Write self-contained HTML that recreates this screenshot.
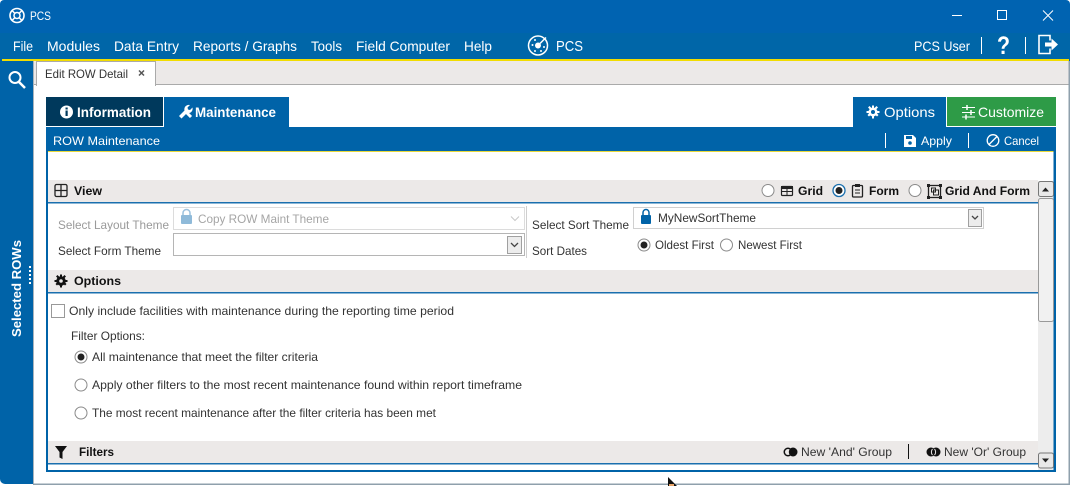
<!DOCTYPE html>
<html><head><meta charset="utf-8"><style>
html,body{margin:0;padding:0;background:#fff;width:1072px;height:486px;overflow:hidden}
svg{display:block}
text{font-family:"Liberation Sans",sans-serif;font-size:12px;fill:#333}
.w{fill:#fff}.m{font-size:14px;fill:#fff}.b{font-weight:bold;fill:#111}.t{font-size:14px;font-weight:bold;fill:#fff}
.g{fill:#9a9a9a}.k{fill:#111}
.rad{fill:#fff;stroke:#8a8a8a;stroke-width:1}
</style></head><body>
<svg width="1072" height="486" viewBox="0 0 1072 486" xmlns="http://www.w3.org/2000/svg">
<rect width="1072" height="486" fill="#fff"/>
<path d="M4 0H1066a4 4 0 0 1 4 4V61H0V4a4 4 0 0 1 4-4z" fill="#0063b1"/>
<rect y="33" width="1070" height="26" fill="#0066a8"/>
<rect x="0" y="59" width="1070" height="2" fill="#0063a8"/>
<rect x="2" y="59" width="1067" height="2" fill="#f2dc00"/>
<path d="M0 61H33V484H5a5 5 0 0 1-5-5z" fill="#0063a8"/>
<rect x="33" y="61" width="1036" height="23" fill="#ece9e8"/>
<rect x="33" y="84" width="1036" height="1" fill="#aaa"/>
<rect x="33" y="61" width="1" height="423" fill="#a9b4bc"/>
<rect x="1068.500" y="61" width="1.500" height="424" fill="#8fa0ac"/>
<rect x="33" y="483.500" width="1037" height="1.500" fill="#8fa0ac"/>
<!-- title -->
<g fill="none" stroke="#fff"><circle cx="17" cy="15.500" r="7" stroke-width="1.600"/><circle cx="17" cy="15.500" r="3" stroke-width="1.500"/><path d="M12 10.500l3 3M22 10.500l-3 3M12 20.500l3-3M22 20.500l-3-3" stroke-width="1.500"/></g>
<text x="30" y="20" class="w" textLength="21" lengthAdjust="spacingAndGlyphs">PCS</text>
<path d="M952 15.500h10" stroke="#fff"/><rect x="997.500" y="10.500" width="9" height="9" fill="none" stroke="#fff"/><path d="M1043 10.500l10 10M1053 10.500l-10 10" stroke="#fff"/>
<!-- menu -->
<text x="13" y="51" class="m" textLength="20" lengthAdjust="spacingAndGlyphs">File</text>
<text x="47" y="51" class="m" textLength="53" lengthAdjust="spacingAndGlyphs">Modules</text>
<text x="114" y="51" class="m" textLength="65" lengthAdjust="spacingAndGlyphs">Data Entry</text>
<text x="193" y="51" class="m" textLength="104" lengthAdjust="spacingAndGlyphs">Reports / Graphs</text>
<text x="311" y="51" class="m" textLength="31" lengthAdjust="spacingAndGlyphs">Tools</text>
<text x="356" y="51" class="m" textLength="94" lengthAdjust="spacingAndGlyphs">Field Computer</text>
<text x="464" y="51" class="m" textLength="28" lengthAdjust="spacingAndGlyphs">Help</text>
<g fill="none" stroke="#fff"><circle cx="538" cy="45.500" r="9.500" stroke-width="1.500"/><circle cx="538" cy="45.500" r="2.500" fill="#fff"/><path d="M540 43.500l6-6" stroke-width="1.500"/></g>
<g fill="#fff"><circle cx="532.500" cy="45" r="1"/><circle cx="535" cy="40" r="1"/><circle cx="535" cy="51" r="1"/><circle cx="541" cy="51" r="1"/><circle cx="544" cy="47" r="1"/></g>
<text x="556" y="51" class="w" style="font-size:15px" textLength="27" lengthAdjust="spacingAndGlyphs">PCS</text>
<text x="914" y="51" class="m" textLength="56" lengthAdjust="spacingAndGlyphs">PCS User</text>
<rect x="981" y="37" width="1" height="17" fill="#fff"/><rect x="1025" y="37" width="1" height="17" fill="#fff"/>
<text x="997" y="54" style="font-size:25px;font-weight:bold;fill:#fff" textLength="13" lengthAdjust="spacingAndGlyphs">?</text>
<path d="M1050 40.500v-5h-11v18h11v-5" fill="none" stroke="#fff" stroke-width="1.600"/><path d="M1045 42.500h6.500v-4l6.500 6-6.500 6v-4h-6.500z" fill="#fff"/>
<!-- sidebar -->
<circle cx="15" cy="77.500" r="5.500" fill="none" stroke="#fff" stroke-width="2"/><path d="M19 82l6 6" stroke="#fff" stroke-width="2.500"/>
<text transform="translate(21,337) rotate(-90)" style="font-size:13px;font-weight:bold;fill:#fff" textLength="97" lengthAdjust="spacingAndGlyphs">Selected ROWs</text>
<g fill="#fff"><rect x="29" y="266" width="2" height="2"/><rect x="29" y="270" width="2" height="2"/><rect x="29" y="274" width="2" height="2"/><rect x="29" y="278" width="2" height="2"/><rect x="29" y="282" width="2" height="2"/></g>
<!-- doc tab -->
<rect x="36.500" y="61.500" width="119" height="24" fill="#fff" stroke="#aaa"/><rect x="37" y="84" width="118" height="2" fill="#fff"/>
<text x="45" y="78" textLength="83" lengthAdjust="spacingAndGlyphs">Edit ROW Detail</text>
<path d="M139 70.500l5 5M144 70.500l-5 5" stroke="#555" stroke-width="1.500"/>
<!-- panel tabs -->
<rect x="46" y="97" width="117" height="29" fill="#00395c"/>
<rect x="164" y="97" width="125" height="30" fill="#0063a8"/>
<rect x="853" y="97" width="93" height="30" fill="#0063a8"/>
<rect x="947" y="97" width="109" height="29" fill="#2e9b47"/>
<circle cx="66.500" cy="112" r="6.500" fill="#fff"/><rect x="65.500" y="110.500" width="2.200" height="5.500" fill="#00395c"/><rect x="65.500" y="107.500" width="2.200" height="2" fill="#00395c"/>
<text x="77" y="117" class="t" textLength="74" lengthAdjust="spacingAndGlyphs">Information</text>
<path d="M179 116l5.500-5.500a4.500 4.500 0 0 1 5.500-5.500l-2.500 2.500.5 2 2 .5 2.500-2.500a4.500 4.500 0 0 1-5.500 5.500l-5.500 5.500z" fill="#fff"/>
<path d="M185.500 111.500l5.500 5.500" stroke="#fff" stroke-width="3"/>
<text x="195" y="117" class="t" textLength="81" lengthAdjust="spacingAndGlyphs">Maintenance</text>
<g fill="#fff"><circle cx="873" cy="112" r="4.500"/><path d="M872 105.500h2v13h-2zM866.500 111h13v2h-13zM868 107.500l1.500-1.500 9 9-1.500 1.500zM878 107.500l-1.500-1.500-9 9 1.500 1.500z"/></g><circle cx="873" cy="112" r="2" fill="#0063a8"/>
<text x="884" y="117" class="m" textLength="51" lengthAdjust="spacingAndGlyphs">Options</text>
<path d="M962 107.500h13M962 112.500h13M962 117h13" stroke="#fff"/><path d="M967 105v5M971 110v5M966 114.500v5" stroke="#fff" stroke-width="1.500"/>
<text x="978" y="117" class="m" textLength="66" lengthAdjust="spacingAndGlyphs">Customize</text>
<!-- header strip -->
<rect x="46" y="127" width="1010" height="24" fill="#0063a8"/>
<rect x="48" y="151" width="1006" height="1" fill="#e9d93a"/>
<text x="53" y="145" class="w" textLength="107" lengthAdjust="spacingAndGlyphs">ROW Maintenance</text>
<rect x="885" y="133" width="1" height="15" fill="#fff"/><rect x="968" y="133" width="1" height="15" fill="#fff"/>
<path d="M904 135h9l3 3v9h-12z" fill="#fff"/><rect x="906" y="136" width="6" height="3" fill="#0063a8"/><circle cx="910" cy="143" r="1.800" fill="#0063a8"/>
<text x="921" y="145" class="w" textLength="31" lengthAdjust="spacingAndGlyphs">Apply</text>
<circle cx="993" cy="140.500" r="5.800" fill="none" stroke="#fff" stroke-width="1.300"/><path d="M989 144.500l8-8" stroke="#fff" stroke-width="1.300"/>
<text x="1004" y="145" class="w" textLength="35" lengthAdjust="spacingAndGlyphs">Cancel</text>
<!-- panel frame -->
<rect x="46" y="151" width="2" height="321" fill="#0063a8"/>
<rect x="1053.500" y="151" width="2.500" height="321" fill="#0063a8"/>
<rect x="46" y="470" width="1010" height="2" fill="#0063a8"/>
<!-- section strips -->
<rect x="48" y="180" width="990" height="22" fill="#ece9e8"/><rect x="48" y="202" width="990" height="1.500" fill="#1a6fae"/>
<rect x="48" y="270" width="990" height="22" fill="#ece9e8"/><rect x="48" y="292" width="990" height="1.500" fill="#1a6fae"/>
<rect x="48" y="441" width="990" height="22" fill="#ece9e8"/><rect x="48" y="463" width="990" height="1.500" fill="#1a6fae"/>
<!-- view -->
<rect x="55" y="184.500" width="12" height="12" rx="1.500" fill="none" stroke="#222" stroke-width="1.300"/><path d="M55 190.500h12M61 184.500v12" stroke="#222" stroke-width="1.300"/>
<text x="74" y="195" class="b" textLength="28" lengthAdjust="spacingAndGlyphs">View</text>
<circle cx="768" cy="190.500" r="6" class="rad"/>
<rect x="781.500" y="186.500" width="11" height="9" rx="1" fill="none" stroke="#222" stroke-width="1.200"/><rect x="781" y="186" width="12" height="3" fill="#222"/><path d="M782 191.500h10M787 188v7" stroke="#222"/>
<text x="798" y="195" class="b" textLength="25" lengthAdjust="spacingAndGlyphs">Grid</text>
<circle cx="839" cy="190.500" r="6" fill="#fff" stroke="#1a6fae" stroke-width="1.300"/><circle cx="839" cy="190.500" r="3.500" fill="#222"/>
<rect x="852.500" y="185.500" width="10" height="11.500" rx="1" fill="none" stroke="#222" stroke-width="1.300"/><rect x="855" y="184" width="5" height="3" fill="#222"/><path d="M855 190h5M855 193h5" stroke="#222"/>
<text x="869" y="195" class="b" textLength="30" lengthAdjust="spacingAndGlyphs">Form</text>
<circle cx="915" cy="190.500" r="6" class="rad"/>
<rect x="928.500" y="185.500" width="12" height="12" fill="none" stroke="#222" stroke-width="1.300"/><rect x="927" y="184" width="3" height="3" fill="#222"/><rect x="939" y="184" width="3" height="3" fill="#222"/><rect x="927" y="196" width="3" height="3" fill="#222"/><rect x="939" y="196" width="3" height="3" fill="#222"/><rect x="931.500" y="188" width="4" height="4" fill="none" stroke="#222"/><rect x="933.500" y="190" width="5" height="5" fill="none" stroke="#222"/>
<text x="945" y="195" class="b" textLength="85" lengthAdjust="spacingAndGlyphs">Grid And Form</text>
<!-- form -->
<text x="58" y="229" class="g" textLength="111" lengthAdjust="spacingAndGlyphs">Select Layout Theme</text>
<text x="58" y="255" textLength="103" lengthAdjust="spacingAndGlyphs">Select Form Theme</text>
<rect x="173.500" y="207.500" width="351" height="22" fill="#fff" stroke="#dcdcdc"/>
<path d="M183 216v-3a3.500 3.500 0 0 1 7 0v3" fill="none" stroke="#9cc2de" stroke-width="1.500"/><rect x="181" y="215" width="11" height="9" rx="1" fill="#8fbad9"/>
<text x="198" y="223" style="fill:#a5a5a5" textLength="131" lengthAdjust="spacingAndGlyphs">Copy ROW Maint Theme</text>
<path d="M511 216.500l4 4 4-4" fill="none" stroke="#c8c8c8"/>
<rect x="173.500" y="233.500" width="351" height="22" fill="#fff" stroke="#b5b5b5"/>
<rect x="507.500" y="236.500" width="14" height="17" fill="#ececec" stroke="#a0a0a0"/><path d="M511 243l3.500 3.500 3.500-3.500" fill="none" stroke="#444" stroke-width="1.300"/>
<rect x="526" y="206" width="1" height="52" fill="#cfcfcf"/>
<text x="532" y="229" textLength="97" lengthAdjust="spacingAndGlyphs">Select Sort Theme</text>
<text x="532" y="255" textLength="55" lengthAdjust="spacingAndGlyphs">Sort Dates</text>
<rect x="633.500" y="207.500" width="350" height="21" fill="#fff" stroke="#d0d0d0"/>
<path d="M643 215.500v-3a3 3 0 0 1 6 0v3" fill="none" stroke="#0063a8" stroke-width="1.500"/><rect x="641" y="215" width="10" height="9" rx="1" fill="#0063a8"/>
<text x="658" y="222" textLength="98" lengthAdjust="spacingAndGlyphs">MyNewSortTheme</text>
<rect x="968.500" y="209.500" width="13" height="17" fill="#ececec" stroke="#a0a0a0"/><path d="M972 216l3 3 3-3" fill="none" stroke="#444" stroke-width="1.300"/>
<circle cx="644" cy="245" r="6" class="rad"/><circle cx="644" cy="245" r="3.500" fill="#222"/>
<text x="655" y="249" textLength="59" lengthAdjust="spacingAndGlyphs">Oldest First</text>
<circle cx="726.500" cy="245" r="6" class="rad"/>
<text x="738" y="249" textLength="64" lengthAdjust="spacingAndGlyphs">Newest First</text>
<!-- options -->
<g fill="#111"><circle cx="61" cy="281" r="4.800"/><path d="M60 274.500h2v13h-2zM54.500 280h13v2h-13zM56 276.500l1.500-1.500 9 9-1.500 1.500zM66 276.500l-1.500-1.500-9 9 1.500 1.500z"/></g><circle cx="61" cy="281" r="1.800" fill="#ece9e8"/>
<text x="74" y="285" class="b" textLength="47" lengthAdjust="spacingAndGlyphs">Options</text>
<rect x="51.500" y="304.500" width="13" height="13" fill="#fff" stroke="#999"/>
<text x="69" y="315" textLength="385" lengthAdjust="spacingAndGlyphs">Only include facilities with maintenance during the reporting time period</text>
<text x="71" y="340" textLength="74" lengthAdjust="spacingAndGlyphs">Filter Options:</text>
<circle cx="81" cy="357" r="6" class="rad"/><circle cx="81" cy="357" r="3.500" fill="#222"/>
<text x="92" y="361" textLength="226" lengthAdjust="spacingAndGlyphs">All maintenance that meet the filter criteria</text>
<circle cx="81" cy="385" r="6" class="rad"/>
<text x="92" y="389" textLength="430" lengthAdjust="spacingAndGlyphs">Apply other filters to the most recent maintenance found within report timeframe</text>
<circle cx="81" cy="413" r="6" class="rad"/>
<text x="92" y="417" textLength="344" lengthAdjust="spacingAndGlyphs">The most recent maintenance after the filter criteria has been met</text>
<!-- filters -->
<path d="M55 446h12l-4.500 6v7l-3-1.500v-5.500z" fill="#111"/>
<text x="79" y="456" class="b" textLength="35" lengthAdjust="spacingAndGlyphs">Filters</text>
<circle cx="793" cy="452" r="4.500" fill="#111"/><circle cx="788" cy="452" r="4.500" fill="#111"/><circle cx="788" cy="452" r="3" fill="#ece9e8"/><path d="M790.500 448.500a4.500 4.500 0 0 1 0 7a4.500 4.500 0 0 1 0-7z" fill="#111"/>
<text x="801" y="456" textLength="91" lengthAdjust="spacingAndGlyphs">New 'And' Group</text>
<rect x="908" y="444" width="1" height="15" fill="#111"/>
<circle cx="931" cy="452" r="4.500" fill="#111"/><circle cx="936" cy="452" r="4.500" fill="#111"/><path d="M932.500 449a4.500 4.500 0 0 0 0 6M934.500 449a4.500 4.500 0 0 1 0 6" fill="none" stroke="#ece9e8"/>
<text x="944" y="456" textLength="82" lengthAdjust="spacingAndGlyphs">New 'Or' Group</text>
<!-- scrollbar -->
<rect x="1038" y="181" width="15.500" height="289" fill="#ededed"/>
<rect x="1038.500" y="181.500" width="15" height="15" rx="2" fill="#e9e9e9" stroke="#777"/><path d="M1042 191.500h7l-3.500-4z" fill="#222"/>
<rect x="1038.500" y="198.500" width="15" height="123" rx="2" fill="#f1f1f1" stroke="#999"/>
<rect x="1038.500" y="453" width="15" height="15" rx="2" fill="#e9e9e9" stroke="#777"/><path d="M1042 458.500h7l-3.500 4z" fill="#222"/>
<!-- cursor -->
<path d="M668 477v9h9z" fill="#111"/><path d="M669 484h5v2h-5z" fill="#e8a468"/>
</svg>
</body></html>
